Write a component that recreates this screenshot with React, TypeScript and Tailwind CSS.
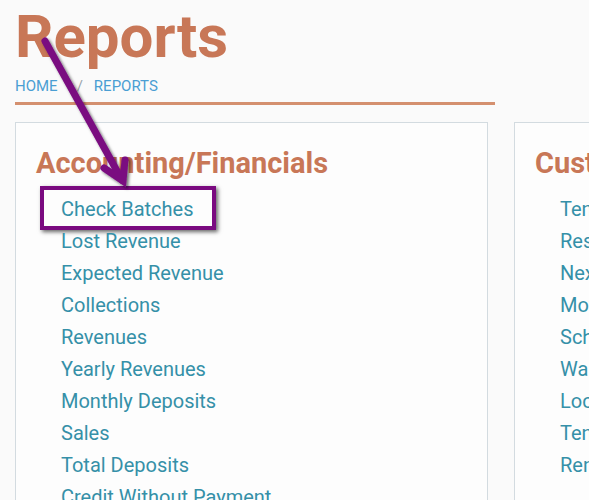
const accounting = [
  "Check Batches",
  "Lost Revenue",
  "Expected Revenue",
  "Collections",
  "Revenues",
  "Yearly Revenues",
  "Monthly Deposits",
  "Sales",
  "Total Deposits",
  "Credit Without Payment",
];

const customers = [
  "Tenant List",
  "Reservations",
  "Next Due",
  "Move Ins",
  "Scheduled Move Outs",
  "Waiting List",
  "Lock Outs",
  "Tenant Insurance",
  "Rentals",
];

function ReportCard({ title, items, highlight }: { title: string; items: string[]; highlight?: string }) {
  return (
    <div className="w-[473px] shrink-0 h-[420px] border border-[#d3dbe0] bg-[#fdfdfd] px-5 pt-[22px]">
      <h2 className="text-[29px] font-bold leading-[36px] text-[#c87757]">{title}</h2>
      <ul className="mt-[12px] pl-[25px]">
        {items.map((item) => (
          <li key={item} className="relative h-8 text-[20px] leading-8 text-[#3590a8]">
            {item}
            {item === highlight && (
              <span className="absolute left-[-21px] top-[-7px] h-[44px] w-[176px] border-4 border-[#7a0a80] shadow-[2px_2px_4px_rgba(0,0,0,0.6)]" />
            )}
          </li>
        ))}
      </ul>
    </div>
  );
}

export default function App() {
  return (
    <div className="relative h-[500px] w-[589px] overflow-hidden bg-[#fafafa] font-['Roboto',sans-serif]">
      <div className="px-[15px]">
        <div className="w-[480px] border-b-[3px] border-[#d4906f]">
          <h1 className="pt-[2px] text-[60px] font-bold leading-[70px] text-[#c87757]">Reports</h1>
          <div className="flex items-center pt-[5px] pb-[7px] text-[15px] leading-[18px] text-[#4a9ed3]">
            <span>HOME</span>
            <span className="ml-[19px] text-[#9aa5ad]">/</span>
            <span className="ml-[11px]">REPORTS</span>
          </div>
        </div>
        <div className="mt-[17px] flex gap-[26px]">
          <ReportCard title="Accounting/Financials" items={accounting} highlight="Check Batches" />
          <ReportCard title="Customers" items={customers} />
        </div>
      </div>

      {/* annotation arrow */}
      <svg className="absolute left-0 top-0" width="200" height="200" viewBox="0 0 200 200">
        <defs>
          <filter id="sh" x="-20%" y="-20%" width="140%" height="140%">
            <feDropShadow dx="2" dy="2" stdDeviation="1.5" floodColor="#000" floodOpacity="0.55" />
          </filter>
        </defs>
        <g filter="url(#sh)" stroke="#7a0a80" strokeWidth="7" strokeLinecap="round" fill="none">
          <line x1="45" y1="41" x2="122" y2="180" />
          <polyline points="104,168 123,181 125,160" strokeLinejoin="miter" />
        </g>
      </svg>
    </div>
  );
}
